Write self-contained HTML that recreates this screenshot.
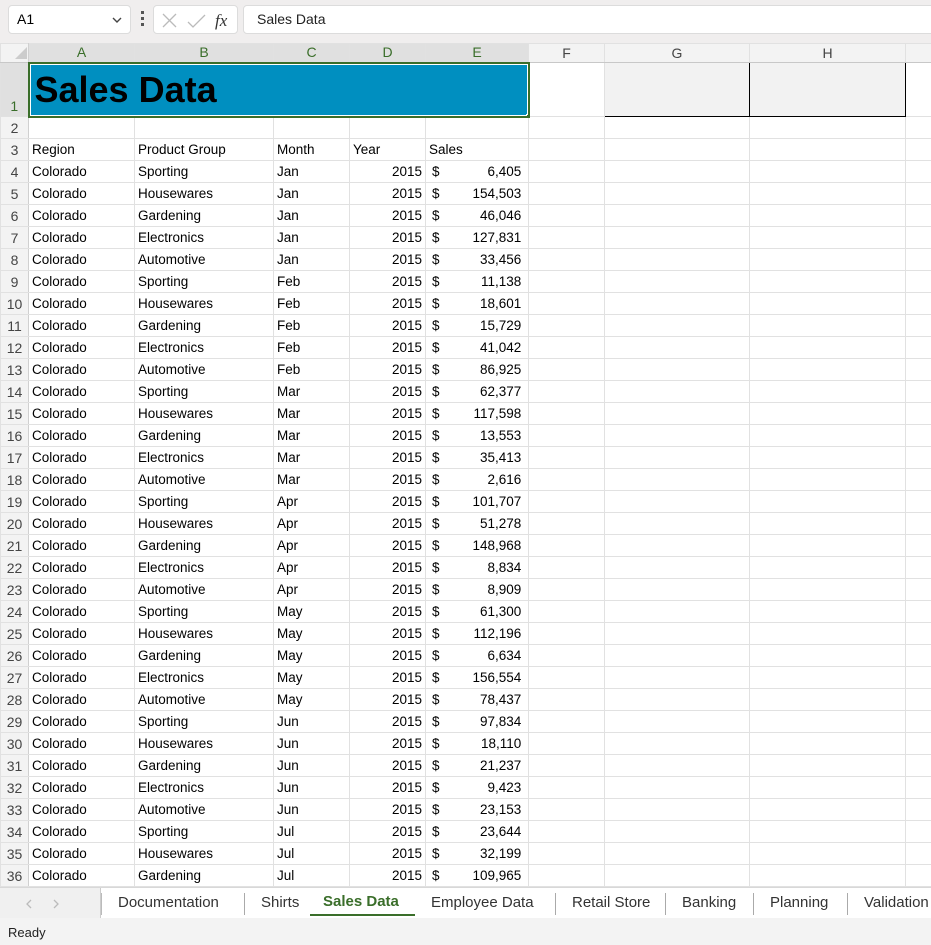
<!DOCTYPE html>
<html><head><meta charset="utf-8"><style>
*{margin:0;padding:0;box-sizing:border-box}
body{width:931px;height:945px;overflow:hidden;background:#fff;font-family:"Liberation Sans",sans-serif;position:relative}
#top{position:absolute;left:0;top:0;width:931px;height:43px;background:#f0eeee}
.box{position:absolute;background:#fff;border:1px solid #dcdcdc;border-radius:4px;height:29px;top:5px}
#grid{position:absolute;left:0;top:43px;width:945px;border-collapse:collapse;table-layout:fixed;font-size:13.5px;color:#000}
#grid td{border:1px solid #e1e1e1;height:22px;padding:0 3px;white-space:nowrap;overflow:hidden;line-height:20px}
#grid td.rh{background:#f3f3f3;color:#444;text-align:center;padding:0;border-color:#e1e1e1 #d0d0d0 #e1e1e1 #e1e1e1;font-size:14px}
#grid tr.ch td{background:#f3f3f3;color:#444;text-align:center;height:19px;line-height:17px;font-size:14px;border-bottom:1px solid #c8c8c8}
#grid tr.ch td.sel{background:#e0e0e0;color:#3a6e2a;border-bottom:2px solid #3a6e2a}
.r{text-align:right}
.d{position:relative}
.d span{position:absolute;left:6px}
#tabs{position:absolute;left:0;top:887px;width:931px;height:31px;background:#f0f0f0;border-top:1px solid #d8d8d8;font-size:15px;color:#333}
.tab{position:absolute;top:5px;height:22px;line-height:20px;border-left:1px solid #aaa;padding-left:16px}
#status{position:absolute;left:0;top:918px;width:931px;height:27px;background:#f3f3f3;font-size:13px;color:#222;padding:7px 0 0 8px}
</style></head><body>
<div id="top">
 <div class="box" style="left:8px;width:123px"><span style="position:absolute;left:8px;top:5px;font-size:14px">A1</span><svg style="position:absolute;left:102px;top:9px" width="12" height="10"><path d="M2 3 L6 7 L10 3" stroke="#444" stroke-width="1.4" fill="none"/></svg></div>
 <div style="position:absolute;left:141px;top:11px;width:3px;height:16px"><div style="width:3px;height:3px;background:#555;margin-bottom:3px"></div><div style="width:3px;height:3px;background:#555;margin-bottom:3px"></div><div style="width:3px;height:3px;background:#555"></div></div>
 <div class="box" style="left:153px;width:85px"><svg style="position:absolute;left:6px;top:5px" width="70" height="20"><path d="M3 3 L16 16 M16 3 L3 16" stroke="#bbb" stroke-width="1.3"/><path d="M28 11 L33 16 L45 4" stroke="#bbb" stroke-width="1.3" fill="none"/><text x="55" y="15" font-family="Liberation Serif" font-style="italic" font-size="17" fill="#333">fx</text></svg></div>
 <div class="box" style="left:243px;width:700px"><span style="position:absolute;left:13px;top:5px;font-size:14px;color:#222">Sales Data</span></div>
</div>
<table id="grid">
<colgroup><col style="width:28px"><col style="width:106px"><col style="width:139px"><col style="width:76px"><col style="width:76px"><col style="width:103px"><col style="width:76px"><col style="width:145px"><col style="width:156px"><col style="width:40px"></colgroup>
<tr class="ch"><td class="rh" style="background:#f3f3f3"><svg width="14" height="14" style="position:relative;left:6px;top:2px"><path d="M13 1 L13 13 L1 13 Z" fill="#ccc"/></svg></td><td class="sel">A</td><td class="sel">B</td><td class="sel">C</td><td class="sel">D</td><td class="sel">E</td><td>F</td><td>G</td><td>H</td><td></td></tr>
<tr style="height:54px"><td class="rh" style="vertical-align:bottom;color:#3a6e2a;background:#e0e0e0">1</td><td colspan="5" style="background:#008fc0;border:2px solid #3a6e2a;box-shadow:inset 0 0 0 1px #fff;font-weight:bold;font-size:36px;line-height:50px;padding-left:5px;position:relative">Sales Data<div style="position:absolute;right:-4px;bottom:-4px;width:6px;height:6px;background:#3a6e2a;border:1px solid #fff"></div></td><td></td><td style="background:#f2f2f2;border:1px solid #000"></td><td style="background:#f2f2f2;border:1px solid #000"></td><td></td></tr>
<tr><td class="rh">2</td><td></td><td></td><td></td><td></td><td></td><td></td><td></td><td></td><td></td></tr>
<tr><td class="rh">3</td><td>Region</td><td>Product Group</td><td>Month</td><td>Year</td><td>Sales</td><td></td><td></td><td></td><td></td></tr>
<tr><td class="rh">4</td><td>Colorado</td><td>Sporting</td><td>Jan</td><td class="r">2015</td><td class="r d"><span>$</span>6,405&nbsp;</td><td></td><td></td><td></td><td></td></tr>
<tr><td class="rh">5</td><td>Colorado</td><td>Housewares</td><td>Jan</td><td class="r">2015</td><td class="r d"><span>$</span>154,503&nbsp;</td><td></td><td></td><td></td><td></td></tr>
<tr><td class="rh">6</td><td>Colorado</td><td>Gardening</td><td>Jan</td><td class="r">2015</td><td class="r d"><span>$</span>46,046&nbsp;</td><td></td><td></td><td></td><td></td></tr>
<tr><td class="rh">7</td><td>Colorado</td><td>Electronics</td><td>Jan</td><td class="r">2015</td><td class="r d"><span>$</span>127,831&nbsp;</td><td></td><td></td><td></td><td></td></tr>
<tr><td class="rh">8</td><td>Colorado</td><td>Automotive</td><td>Jan</td><td class="r">2015</td><td class="r d"><span>$</span>33,456&nbsp;</td><td></td><td></td><td></td><td></td></tr>
<tr><td class="rh">9</td><td>Colorado</td><td>Sporting</td><td>Feb</td><td class="r">2015</td><td class="r d"><span>$</span>11,138&nbsp;</td><td></td><td></td><td></td><td></td></tr>
<tr><td class="rh">10</td><td>Colorado</td><td>Housewares</td><td>Feb</td><td class="r">2015</td><td class="r d"><span>$</span>18,601&nbsp;</td><td></td><td></td><td></td><td></td></tr>
<tr><td class="rh">11</td><td>Colorado</td><td>Gardening</td><td>Feb</td><td class="r">2015</td><td class="r d"><span>$</span>15,729&nbsp;</td><td></td><td></td><td></td><td></td></tr>
<tr><td class="rh">12</td><td>Colorado</td><td>Electronics</td><td>Feb</td><td class="r">2015</td><td class="r d"><span>$</span>41,042&nbsp;</td><td></td><td></td><td></td><td></td></tr>
<tr><td class="rh">13</td><td>Colorado</td><td>Automotive</td><td>Feb</td><td class="r">2015</td><td class="r d"><span>$</span>86,925&nbsp;</td><td></td><td></td><td></td><td></td></tr>
<tr><td class="rh">14</td><td>Colorado</td><td>Sporting</td><td>Mar</td><td class="r">2015</td><td class="r d"><span>$</span>62,377&nbsp;</td><td></td><td></td><td></td><td></td></tr>
<tr><td class="rh">15</td><td>Colorado</td><td>Housewares</td><td>Mar</td><td class="r">2015</td><td class="r d"><span>$</span>117,598&nbsp;</td><td></td><td></td><td></td><td></td></tr>
<tr><td class="rh">16</td><td>Colorado</td><td>Gardening</td><td>Mar</td><td class="r">2015</td><td class="r d"><span>$</span>13,553&nbsp;</td><td></td><td></td><td></td><td></td></tr>
<tr><td class="rh">17</td><td>Colorado</td><td>Electronics</td><td>Mar</td><td class="r">2015</td><td class="r d"><span>$</span>35,413&nbsp;</td><td></td><td></td><td></td><td></td></tr>
<tr><td class="rh">18</td><td>Colorado</td><td>Automotive</td><td>Mar</td><td class="r">2015</td><td class="r d"><span>$</span>2,616&nbsp;</td><td></td><td></td><td></td><td></td></tr>
<tr><td class="rh">19</td><td>Colorado</td><td>Sporting</td><td>Apr</td><td class="r">2015</td><td class="r d"><span>$</span>101,707&nbsp;</td><td></td><td></td><td></td><td></td></tr>
<tr><td class="rh">20</td><td>Colorado</td><td>Housewares</td><td>Apr</td><td class="r">2015</td><td class="r d"><span>$</span>51,278&nbsp;</td><td></td><td></td><td></td><td></td></tr>
<tr><td class="rh">21</td><td>Colorado</td><td>Gardening</td><td>Apr</td><td class="r">2015</td><td class="r d"><span>$</span>148,968&nbsp;</td><td></td><td></td><td></td><td></td></tr>
<tr><td class="rh">22</td><td>Colorado</td><td>Electronics</td><td>Apr</td><td class="r">2015</td><td class="r d"><span>$</span>8,834&nbsp;</td><td></td><td></td><td></td><td></td></tr>
<tr><td class="rh">23</td><td>Colorado</td><td>Automotive</td><td>Apr</td><td class="r">2015</td><td class="r d"><span>$</span>8,909&nbsp;</td><td></td><td></td><td></td><td></td></tr>
<tr><td class="rh">24</td><td>Colorado</td><td>Sporting</td><td>May</td><td class="r">2015</td><td class="r d"><span>$</span>61,300&nbsp;</td><td></td><td></td><td></td><td></td></tr>
<tr><td class="rh">25</td><td>Colorado</td><td>Housewares</td><td>May</td><td class="r">2015</td><td class="r d"><span>$</span>112,196&nbsp;</td><td></td><td></td><td></td><td></td></tr>
<tr><td class="rh">26</td><td>Colorado</td><td>Gardening</td><td>May</td><td class="r">2015</td><td class="r d"><span>$</span>6,634&nbsp;</td><td></td><td></td><td></td><td></td></tr>
<tr><td class="rh">27</td><td>Colorado</td><td>Electronics</td><td>May</td><td class="r">2015</td><td class="r d"><span>$</span>156,554&nbsp;</td><td></td><td></td><td></td><td></td></tr>
<tr><td class="rh">28</td><td>Colorado</td><td>Automotive</td><td>May</td><td class="r">2015</td><td class="r d"><span>$</span>78,437&nbsp;</td><td></td><td></td><td></td><td></td></tr>
<tr><td class="rh">29</td><td>Colorado</td><td>Sporting</td><td>Jun</td><td class="r">2015</td><td class="r d"><span>$</span>97,834&nbsp;</td><td></td><td></td><td></td><td></td></tr>
<tr><td class="rh">30</td><td>Colorado</td><td>Housewares</td><td>Jun</td><td class="r">2015</td><td class="r d"><span>$</span>18,110&nbsp;</td><td></td><td></td><td></td><td></td></tr>
<tr><td class="rh">31</td><td>Colorado</td><td>Gardening</td><td>Jun</td><td class="r">2015</td><td class="r d"><span>$</span>21,237&nbsp;</td><td></td><td></td><td></td><td></td></tr>
<tr><td class="rh">32</td><td>Colorado</td><td>Electronics</td><td>Jun</td><td class="r">2015</td><td class="r d"><span>$</span>9,423&nbsp;</td><td></td><td></td><td></td><td></td></tr>
<tr><td class="rh">33</td><td>Colorado</td><td>Automotive</td><td>Jun</td><td class="r">2015</td><td class="r d"><span>$</span>23,153&nbsp;</td><td></td><td></td><td></td><td></td></tr>
<tr><td class="rh">34</td><td>Colorado</td><td>Sporting</td><td>Jul</td><td class="r">2015</td><td class="r d"><span>$</span>23,644&nbsp;</td><td></td><td></td><td></td><td></td></tr>
<tr><td class="rh">35</td><td>Colorado</td><td>Housewares</td><td>Jul</td><td class="r">2015</td><td class="r d"><span>$</span>32,199&nbsp;</td><td></td><td></td><td></td><td></td></tr>
<tr><td class="rh">36</td><td>Colorado</td><td>Gardening</td><td>Jul</td><td class="r">2015</td><td class="r d"><span>$</span>109,965&nbsp;</td><td></td><td></td><td></td><td></td></tr>
<tr><td class="rh">37</td><td>Colorado</td><td>Electronics</td><td>Jul</td><td class="r">2015</td><td class="r d"><span>$</span>1&nbsp;</td><td></td><td></td><td></td><td></td></tr>
</table>
<div id="tabs">
 <svg style="position:absolute;left:24px;top:10px" width="40" height="12"><path d="M7 2 L3 6 L7 10" stroke="#bbb" stroke-width="1.3" fill="none"/><path d="M30 2 L34 6 L30 10" stroke="#bbb" stroke-width="1.3" fill="none"/></svg>
 <div style="position:absolute;left:100px;top:0;width:831px;height:31px;background:#fff;border-left:1px solid #ccc"></div>
 <div class="tab" style="left:101px;width:143px;border-left:1px solid #bbb">Documentation</div>
 <div class="tab" style="left:244px;width:66px">Shirts</div>
 <div style="position:absolute;left:310px;top:0;width:105px;height:28px;background:#fff;border-bottom:2px solid #3a6e2a;color:#3a6e2a;font-weight:bold;line-height:28px;padding-left:13px">Sales Data</div>
 <div class="tab" style="left:415px;width:140px;border-left:none">Employee Data</div>
 <div class="tab" style="left:555px;width:110px">Retail Store</div>
 <div class="tab" style="left:665px;width:88px">Banking</div>
 <div class="tab" style="left:753px;width:94px">Planning</div>
 <div class="tab" style="left:847px;width:100px">Validation</div>
</div>
<div id="status">Ready</div>
</body></html>
